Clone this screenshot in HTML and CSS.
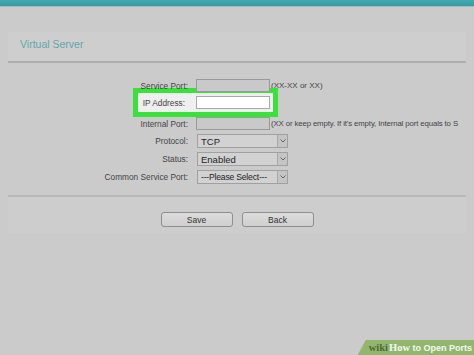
FILE: index.html
```html
<!DOCTYPE html>
<html lang="en">
<head>
    <meta charset="UTF-8">
    <meta name="viewport" content="width=device-width, initial-scale=1.0">
    <title>Virtual Server</title>
    <link rel="stylesheet" href="styles.css">
</head>
<body>
    <div class="topbar"></div>

    <section class="panel">
        <div class="panel-head">Virtual Server</div>

        <div class="form">
            <div class="row">
                <label class="label">Service Port:</label>
                <span class="field"></span>
                <span class="hint">(XX-XX or XX)</span>
            </div>
            <div class="row row-ip">
                <span class="highlight"></span>
                <label class="label">IP Address:</label>
                <span class="field field-white"></span>
            </div>
            <div class="row">
                <label class="label">Internal Port:</label>
                <span class="field"></span>
                <span class="hint hint-long">(XX or keep empty. If it's empty, Internal port equals to S</span>
            </div>
            <div class="row row-sel">
                <label class="label">Protocol:</label>
                <span class="select"><span class="sel-text">TCP</span><span class="sel-arrow"><svg width="6" height="4" viewBox="0 0 6 4"><path d="M0.5 0.5 L3 3 L5.5 0.5" fill="none" stroke="#666" stroke-width="1"/></svg></span></span>
            </div>
            <div class="row row-sel">
                <label class="label">Status:</label>
                <span class="select"><span class="sel-text">Enabled</span><span class="sel-arrow"><svg width="6" height="4" viewBox="0 0 6 4"><path d="M0.5 0.5 L3 3 L5.5 0.5" fill="none" stroke="#666" stroke-width="1"/></svg></span></span>
            </div>
            <div class="row row-sel">
                <label class="label">Common Service Port:</label>
                <span class="select"><span class="sel-text sel-small">---Please Select---</span><span class="sel-arrow"><svg width="6" height="4" viewBox="0 0 6 4"><path d="M0.5 0.5 L3 3 L5.5 0.5" fill="none" stroke="#666" stroke-width="1"/></svg></span></span>
            </div>
        </div>

        <div class="actions">
            <button class="btn">Save</button>
            <button class="btn btn-back">Back</button>
        </div>
    </section>

    <div class="badge"><span class="wiki">wiki</span><span class="how">How</span> to Open Ports</div>
</body>
</html>
```

FILE: styles.css
```css
body {
    margin: 0;
    width: 474px;
    height: 355px;
    overflow: hidden;
    position: relative;
    background: #cbcbcb;
    font-family: "Liberation Sans", Arial, sans-serif;
    color: #444;
}
.topbar {
    height: 6px;
    background: linear-gradient(#44a9b0, #3a9aa2);
    border-bottom: 1px solid #9fbcbe;
}
.panel {
    width: 458px;
    margin: 25px 0 0 8px;
    overflow: hidden;
}
.panel-head {
    height: 29px;
    padding-left: 12px;
    line-height: 24px;
    font-size: 10.5px;
    color: #62a7aa;
    background: #cecece;
    border-bottom: 2px solid #aeaeae;
}
.form {
    padding-top: 14px;
}
.row {
    display: flex;
    align-items: center;
    height: 17px;
    white-space: nowrap;
}
.row-sel {
    height: 18px;
}
.label {
    flex-shrink: 0;
    width: 180px;
    text-align: right;
    font-size: 8.3px;
    color: #444;
    position: relative;
    z-index: 1;
}
.field {
    flex-shrink: 0;
    width: 72px;
    height: 11px;
    margin-left: 8px;
    border: 1px solid #9a9a9a;
    background: #c9c9c9;
    position: relative;
    z-index: 1;
}
.field-white {
    background: #fff;
    border-color: #a9a9a9;
}
.hint {
    margin-left: 1px;
    font-size: 8px;
    color: #444;
}
.hint-long {
    font-size: 7.8px;
    letter-spacing: -0.12px;
}
.row-ip {
    position: relative;
    margin-bottom: 4px;
}
.row-ip .label {
    width: 177px;
    margin-right: 3px;
}
.highlight {
    position: absolute;
    left: 125px;
    top: -6px;
    width: 135px;
    height: 19px;
    border: 5px solid #39e23a;
    background: #efefef;
}
.select {
    flex-shrink: 0;
    display: flex;
    align-items: center;
    width: 89px;
    height: 12px;
    margin-left: 9px;
    border: 1px solid #a0a0a0;
    background: #d2d2d2;
}
.sel-text {
    flex: 1;
    padding-left: 3px;
    font-size: 9.5px;
    color: #222;
    overflow: hidden;
}
.sel-small {
    font-size: 8.6px;
    letter-spacing: -0.2px;
}
.sel-arrow {
    display: flex;
    align-items: center;
    justify-content: center;
    width: 9px;
    height: 12px;
    border-left: 1px solid #a8a8a8;
    background: #c4c4c4;
}
.actions {
    display: flex;
    justify-content: center;
    gap: 9px;
    margin-top: 9px;
    padding: 15px 0 6px;
    border-top: 2px solid #b8b8b8;
    background: #cdcdcd;
}
.btn {
    width: 72px;
    height: 15px;
    padding: 0;
    font-family: "Liberation Sans", Arial, sans-serif;
    font-size: 8.5px;
    color: #333;
    border: 1px solid #8e8e8e;
    border-radius: 3px;
    background: linear-gradient(#dcdcdc, #cfcfcf);
}
.badge {
    position: absolute;
    right: 0;
    bottom: 0;
    height: 15px;
    padding: 0 2px 0 11px;
    line-height: 15px;
    font-size: 9px;
    font-weight: bold;
    color: #f4f8ee;
    background: #93b66e;
    clip-path: polygon(8px 0, 100% 0, 100% 100%, 0 100%);
}
.wiki {
    color: #4e6b33;
    font-family: "Liberation Serif", serif;
    font-size: 10.5px;
    margin-right: 1px;
}
.how {
    font-family: "Liberation Serif", serif;
    font-size: 10.5px;
}
```
